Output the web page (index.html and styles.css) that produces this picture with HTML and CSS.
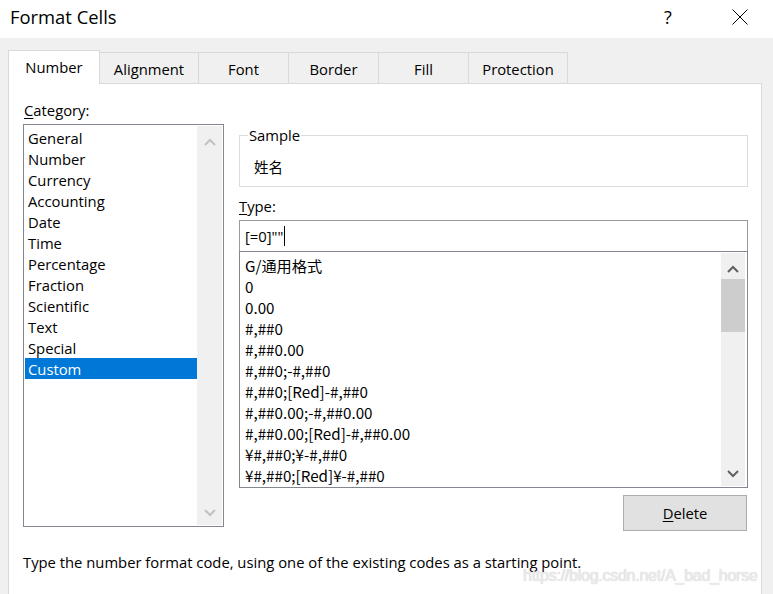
FILE: index.html
```html
<!DOCTYPE html>
<html>
<head>
<meta charset="utf-8">
<title>Format Cells</title>
<link rel="stylesheet" href="styles.css">
</head>
<body>
<div class="titlebar">
  <span class="title">Format Cells</span>
  <span class="help">?</span>
  <span class="close">
    <svg width="16" height="16" viewBox="0 0 16 16"><path d="M0.5 0.5 L15.5 15.5 M15.5 0.5 L0.5 15.5" stroke="#000" stroke-width="1" fill="none"/></svg>
  </span>
</div>
<div class="dialog">
  <div class="tabs">
    <div class="tab active t-number">Number</div>
    <div class="tab t-align">Alignment</div>
    <div class="tab t-font">Font</div>
    <div class="tab t-border">Border</div>
    <div class="tab t-fill">Fill</div>
    <div class="tab t-prot">Protection</div>
  </div>
  <div class="panel">
    <div class="cols">
      <div class="left">
        <div class="label cat-label"><u>C</u>ategory:</div>
        <div class="listbox cat">
          <ul class="items">
            <li>General</li>
            <li>Number</li>
            <li>Currency</li>
            <li>Accounting</li>
            <li>Date</li>
            <li>Time</li>
            <li>Percentage</li>
            <li>Fraction</li>
            <li>Scientific</li>
            <li>Text</li>
            <li>Special</li>
            <li class="selected">Custom</li>
          </ul>
          <div class="vscroll disabled">
            <svg class="arrow" width="12" height="8" viewBox="0 0 12 8"><path d="M1 7 L6 2 L11 7" stroke="currentColor" stroke-width="2" fill="none"/></svg>
            <div class="track"></div>
            <svg class="arrow" width="12" height="8" viewBox="0 0 12 8"><path d="M1 1 L6 6 L11 1" stroke="currentColor" stroke-width="2" fill="none"/></svg>
          </div>
        </div>
      </div>
      <div class="right">
        <fieldset class="sample">
          <legend>Sample</legend>
          <div class="sample-value">姓名</div>
        </fieldset>
        <div class="label type-label"><u>T</u>ype:</div>
        <div class="input">[=0]""<span class="caret"></span></div>
        <div class="listbox fmt">
          <ul class="items">
            <li>G/通用格式</li>
            <li>0</li>
            <li>0.00</li>
            <li>#,##0</li>
            <li>#,##0.00</li>
            <li>#,##0;-#,##0</li>
            <li>#,##0;[Red]-#,##0</li>
            <li>#,##0.00;-#,##0.00</li>
            <li>#,##0.00;[Red]-#,##0.00</li>
            <li>¥#,##0;¥-#,##0</li>
            <li>¥#,##0;[Red]¥-#,##0</li>
          </ul>
          <div class="vscroll">
            <svg class="arrow" width="12" height="8" viewBox="0 0 12 8"><path d="M1 7 L6 2 L11 7" stroke="currentColor" stroke-width="2" fill="none"/></svg>
            <div class="track"><div class="thumb"></div></div>
            <svg class="arrow" width="12" height="8" viewBox="0 0 12 8"><path d="M1 1 L6 6 L11 1" stroke="currentColor" stroke-width="2" fill="none"/></svg>
          </div>
        </div>
        <div class="actions">
          <button class="btn"><u>D</u>elete</button>
        </div>
      </div>
    </div>
    <p class="hint">Type the number format code, using one of the existing codes as a starting point.</p>
  </div>
</div>
<div class="watermark">https://blog.csdn.net/A_bad_horse</div>
</body>
</html>
```

FILE: styles.css
```css
* { box-sizing: border-box; }
html, body {
  margin: 0;
  padding: 0;
  height: 594px;
  overflow: hidden;
}
body {
  background: #f0f0f0;
  font-family: "Open Sans", "Noto Sans", "Noto Sans CJK SC", sans-serif;
  font-size: 14.8px;
  color: #000;
  position: relative;
  display: flex;
  flex-direction: column;
}
u { text-decoration: underline; text-underline-offset: 2px; }

.titlebar {
  height: 38px;
  flex: none;
  background: #fff;
  display: flex;
  align-items: center;
  padding-left: 10px;
}
.title {
  font-size: 18.4px;
  flex: 1;
  margin-top: -5px;
}
.help {
  font-size: 18px;
  width: 68px;
  margin-top: -5px;
}
.close {
  width: 41px;
  display: flex;
  margin-top: -4px;
}

.dialog {
  flex: 1;
  min-height: 0;
  display: flex;
  flex-direction: column;
  padding: 12px 12px 0 8px;
}
.tabs {
  display: flex;
  align-items: flex-end;
  height: 33px;
  flex: none;
  position: relative;
  z-index: 1;
}
.tab {
  height: 31px;
  border: 1px solid #d9d9d9;
  border-left: none;
  border-bottom: none;
  background: #f0f0f0;
  display: flex;
  align-items: center;
  justify-content: center;
  padding-top: 1px;
}
.tab.active {
  height: 34px;
  margin-bottom: -1px;
  background: #fff;
  border-left: 1px solid #d9d9d9;
  padding-top: 0;
  padding-bottom: 1px;
}
.t-number { width: 92px; }
.t-align { width: 99px; }
.t-font { width: 90px; }
.t-border { width: 90px; }
.t-fill { width: 90px; }
.t-prot { width: 99px; }

.panel {
  width: 754px;
  flex: 1;
  min-height: 0;
  background: #fff;
  border: 1px solid #d9d9d9;
  border-bottom: none;
  padding: 16px 0 0 14px;
}
.cols {
  display: flex;
  align-items: flex-start;
  gap: 15px;
}
.left { width: 201px; }
.right { width: 509px; }

.label {
  line-height: 20px;
  height: 20px;
}
.cat-label { padding-left: 1px; }

.listbox {
  border: 1px solid #828790;
  background: #fff;
  display: flex;
}
.items {
  list-style: none;
  margin: 0;
  padding: 0;
  flex: 1;
}
.items li {
  height: 21px;
  line-height: 21px;
  white-space: nowrap;
}
.vscroll {
  width: 25px;
  background: #f0f0f0;
  display: flex;
  flex-direction: column;
  align-items: center;
  color: #606060;
}
.vscroll.disabled { color: #c2c2c2; }
.vscroll .arrow { flex: none; }
.track {
  flex: 1;
  align-self: stretch;
}

.cat {
  margin-top: 4px;
  height: 403px;
  padding: 1px;
}
.cat .items { padding-top: 1px; }
.cat .items li { padding-left: 3px; line-height: 23px; }
.cat .items li.selected {
  background: #0078d7;
  color: #fff;
}
.cat .vscroll { padding: 12px 0 8px; }

.sample {
  margin: 26px 0 0 0;
  border: 1px solid #dcdcdc;
  padding: 13px 0 9px 14px;
  min-width: 0;
}
.sample legend {
  padding: 0 1px;
  margin-left: -6px;
  line-height: 18px;
}
.sample-value {
  line-height: 20px;
  font-family: "Noto Sans CJK SC", sans-serif;
  font-size: 14.5px;
}

.type-label { margin-top: 9px; margin-bottom: 4px; }
.input {
  height: 32px;
  border: 1px solid #9a9a9a;
  padding-left: 5px;
  display: flex;
  align-items: center;
}
.caret {
  display: inline-block;
  width: 1px;
  height: 20px;
  background: #000;
  margin-left: 1px;
}

.fmt {
  margin-top: -1px;
  height: 237px;
  padding: 1px;
}
.fmt .items {
  padding: 2px 0 0 4px;
  font-family: "Noto Sans CJK SC", sans-serif;
  font-size: 15.2px;
}
.fmt .items li { line-height: 21px; }
.fmt .vscroll {
  width: 24px;
  margin-right: 1px;
  padding: 12px 0 8px;
}
.fmt .track { padding-top: 6px; }
.thumb {
  height: 53px;
  background: #cdcdcd;
}

.actions {
  display: flex;
  justify-content: flex-end;
  margin-top: 7px;
  padding-right: 1px;
}
.btn {
  width: 124px;
  height: 36px;
  background: #e1e1e1;
  border: 1px solid #adadad;
  font-family: inherit;
  font-size: 14.8px;
  color: #000;
  padding: 0;
}

.hint {
  margin: 21px 0 0 0;
  line-height: 20px;
}

.watermark {
  position: absolute;
  left: 523px;
  top: 567px;
  font-family: "Liberation Sans", sans-serif;
  font-size: 16px;
  color: #ececec;
  text-shadow: 0 0 1px #bdbdbd;
  letter-spacing: -0.25px;
}
```
